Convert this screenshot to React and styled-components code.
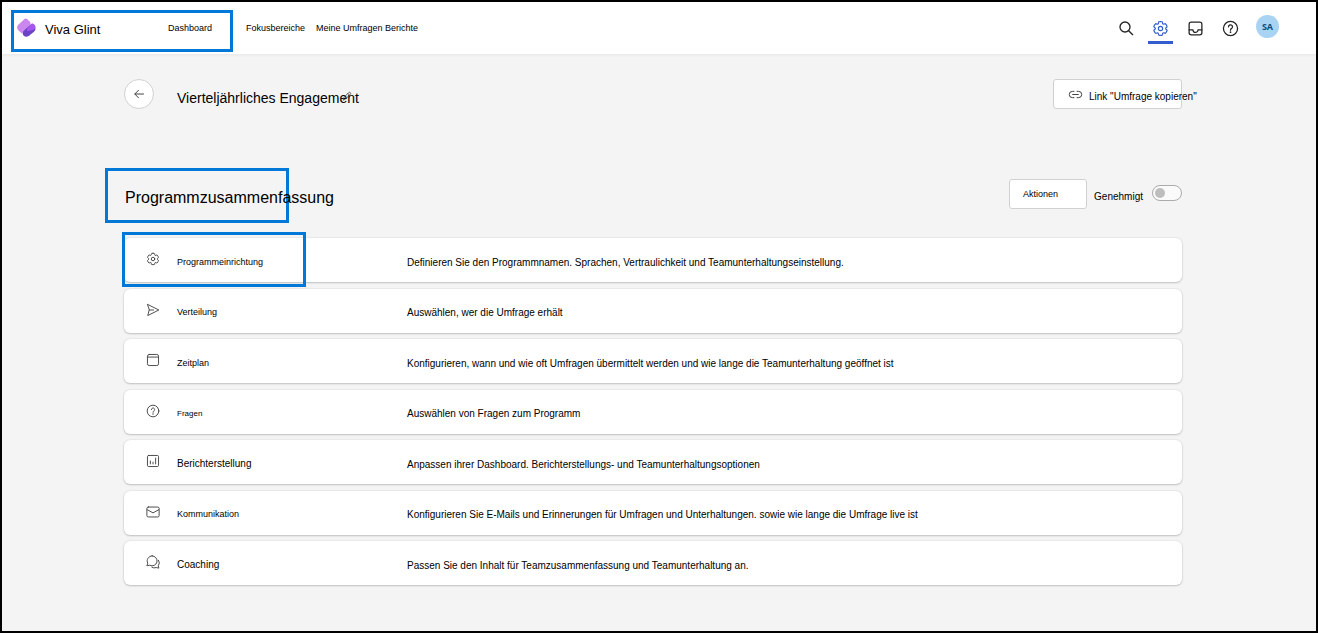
import React, { useState } from "react";
import styled, { createGlobalStyle, css } from "styled-components";

const GlobalStyle = createGlobalStyle`
  * {
    box-sizing: border-box;
  }

  body {
    margin: 0;
    color: #000;
    background: #f4f4f4;
    font-family: "Liberation Sans", Arial, sans-serif;
    font-size: 10px;
  }

  button {
    font-family: inherit;
    color: inherit;
    cursor: pointer;
  }
`;

const Page = styled.div`
  min-height: 100vh;
  border: 2px solid #000;
`;

const highlight = css`
  border: 3px solid #0078d7;
`;

const Header = styled.header`
  display: flex;
  align-items: center;
  justify-content: space-between;
  height: 52px;
  padding: 0 37px 0 9px;
  background: #fff;
  box-shadow: 0 1px 3px rgba(0, 0, 0, 0.06);
`;

const Nav = styled.nav`
  display: flex;
  align-items: center;
  gap: 11px;
  padding-top: 6px;
`;

const BrandBox = styled.div`
  ${highlight}
  display: flex;
  align-items: center;
  justify-content: space-between;
  width: 222px;
  height: 42px;
  padding: 0 18px 7px 3px;
  margin-right: 2px;
`;

const Brand = styled.a`
  display: flex;
  align-items: center;
  gap: 9px;
  color: #000;
  font-size: 13px;
  text-decoration: none;

  span {
    padding-top: 4px;
  }
`;

const NavLink = styled.a`
  padding-bottom: 6px;
  color: #000;
  font-size: 9px;
  line-height: 12px;
  white-space: nowrap;
  text-decoration: none;
`;

const BrandLink = styled(NavLink)`
  padding-bottom: 0;
`;

const Tools = styled.div`
  display: flex;
  align-items: center;
  gap: 10px;
`;

const ToolButton = styled.button`
  display: flex;
  align-items: center;
  justify-content: center;
  width: 25px;
  height: 32px;
  padding: 0;
  border: 0;
  border-top: 3px solid transparent;
  border-bottom: 3px solid ${({ $active }) => ($active ? "#335ccc" : "transparent")};
  color: ${({ $active }) => ($active ? "#335ccc" : "#242424")};
  background: none;
`;

const Avatar = styled.button`
  width: 23px;
  height: 23px;
  margin: 0 0 3px 3px;
  padding: 0;
  border: 0;
  border-radius: 50%;
  background: #a9d3f2;
  && {
    color: #0f4c7c;
  }
  font-family: "Open Sans", sans-serif;
  font-size: 9px;
  font-weight: 700;
`;

const Main = styled.main`
  padding: 25px 134px 40px 122px;
`;

const TitleRow = styled.div`
  display: flex;
  align-items: center;
  justify-content: space-between;
`;

const TitleGroup = styled.div`
  display: flex;
  align-items: center;
  gap: 23px;
`;

const BackButton = styled.button`
  display: flex;
  align-items: center;
  justify-content: center;
  width: 30px;
  height: 30px;
  padding: 0;
  border: 1px solid #d1d1d1;
  border-radius: 50%;
  color: #424242;
  background: #fff;
`;

const Title = styled.h1`
  position: relative;
  margin: 0;
  padding-top: 8px;
  font-size: 14px;
  font-weight: 400;
  line-height: 20px;
`;

const EditButton = styled.button`
  position: absolute;
  top: 11px;
  right: 7px;
  display: flex;
  padding: 0;
  border: 0;
  color: #424242;
  background: none;
`;

const Button = styled.button`
  display: flex;
  align-items: center;
  gap: 6px;
  width: ${({ $wide }) => ($wide ? 129 : 78)}px;
  height: 30px;
  padding: 0 0 0 ${({ $wide }) => ($wide ? 14 : 13)}px;
  border: 1px solid #d1d1d1;
  border-radius: 3px;
  background: #fff;
  font-size: ${({ $wide }) => ($wide ? 10 : 9)}px;
  white-space: nowrap;

  span {
    padding-top: 4px;
  }

  svg {
    flex: none;
    color: #424242;
  }
`;

const SectionRow = styled.div`
  display: flex;
  align-items: center;
  justify-content: space-between;
  margin: 59px 0 15px -19px;
`;

const SectionBox = styled.div`
  ${highlight}
  width: 184px;
  height: 55px;
  padding: 17px 0 0 17px;
`;

const SectionTitle = styled.h2`
  margin: 0;
  font-size: 16px;
  font-weight: 400;
  line-height: 20px;
  white-space: nowrap;
`;

const Controls = styled.div`
  display: flex;
  align-items: center;
  gap: 7px;
  padding-bottom: 3px;
`;

const ToggleLabel = styled.label`
  display: flex;
  align-items: center;
  gap: 9px;

  span {
    padding-top: 4px;
  }
`;

const Toggle = styled.input`
  appearance: none;
  display: flex;
  align-items: center;
  width: 30px;
  height: 16px;
  margin: 0 0 2px;
  padding: 0 2px;
  border: 1px solid #ababab;
  border-radius: 8px;
  background: #fafafa;

  &::before {
    content: "";
    width: 10px;
    height: 10px;
    border-radius: 50%;
    background: #bdbdbd;
  }

  &:checked {
    justify-content: flex-end;
  }
`;

const Cards = styled.ul`
  display: flex;
  flex-direction: column;
  justify-content: space-between;
  min-height: 347px;
  margin: 0;
  padding: 0;
  list-style: none;
`;

const Card = styled.li`
  position: relative;
  border-radius: 6px;
  background: #fff;
  box-shadow: 0 0 2px rgba(0, 0, 0, 0.14), 0 1px 2px rgba(0, 0, 0, 0.18);
`;

const CardLink = styled.a`
  display: grid;
  grid-template-columns: 31px 230px 1fr;
  align-items: center;
  height: 44px;
  padding: 0 22px;
  color: #000;
  text-decoration: none;

  svg {
    margin-bottom: 2px;
    color: #424242;
  }
`;

const CardName = styled.span`
  padding-top: 3px;
  font-size: ${({ $size }) => $size}px;
`;

const CardText = styled.span`
  padding-top: 4px;
  font-size: 10px;
`;

const Marker = styled.div`
  ${highlight}
  position: absolute;
  top: -6px;
  left: -2px;
  width: 184px;
  height: 55px;
  pointer-events: none;
`;

const Icon = ({ size = 14, weight = 1.6, children }) => (
  <svg
    width={size}
    height={size}
    viewBox="0 0 24 24"
    fill="none"
    stroke="currentColor"
    strokeWidth={weight}
    strokeLinecap="round"
    strokeLinejoin="round"
    aria-hidden="true"
  >
    {children}
  </svg>
);

const GearShape = () => (
  <>
    <path d="M12.01 2.25c.74 0 1.47.1 2.18.25.32.07.55.33.59.65l.17 1.53a1.38 1.38 0 0 0 1.92 1.11l1.4-.61c.3-.13.64-.06.85.17a9.8 9.8 0 0 1 2.2 3.8c.1.3 0 .63-.26.82l-1.25.92a1.38 1.38 0 0 0 0 2.22l1.25.92c.26.19.36.52.27.82a9.8 9.8 0 0 1-2.2 3.8.75.75 0 0 1-.85.17l-1.4-.62a1.38 1.38 0 0 0-1.93 1.12l-.17 1.52a.75.75 0 0 1-.58.65 9.52 9.52 0 0 1-4.4 0 .75.75 0 0 1-.57-.65l-.17-1.52a1.38 1.38 0 0 0-1.93-1.11l-1.4.62a.75.75 0 0 1-.85-.18 9.8 9.8 0 0 1-2.2-3.8c-.1-.3 0-.63.26-.82l1.25-.92a1.38 1.38 0 0 0 0-2.22l-1.24-.92a.75.75 0 0 1-.28-.82 9.8 9.8 0 0 1 2.2-3.8c.23-.23.57-.3.86-.17l1.4.62c.4.17.86.15 1.25-.08.38-.22.63-.6.68-1.04l.17-1.53a.75.75 0 0 1 .58-.65c.72-.16 1.45-.24 2.2-.25Z" />
    <circle cx="12" cy="12" r="3" />
  </>
);

const HelpShape = () => (
  <>
    <circle cx="12" cy="12" r="10" />
    <path d="M9.2 9.6a2.8 2.8 0 1 1 4.5 2.2c-1.1.8-1.7 1.3-1.7 2.5" />
    <path d="M12 17.2v.1" strokeWidth="2.4" />
  </>
);

const Logo = () => (
  <svg width="19" height="19" viewBox="0 0 19 19" aria-hidden="true">
    <path
      d="M6 17V12.5L13.5 6.5L16 6.5Q18.5 8 18.5 10.5Q18.500 12.500 17 13.800L12 17.700Q9.500 19.300 7.500 18.200Z"
      fill="#6b43c4"
    />
    <path
      d="M10 10.500L15 5.200Q18.500 6.500 18.500 9Q18.400 11 16 12Q12.500 13 10 13Z"
      fill="#a556ee"
    />
    <path
      d="M1 7L7.500 1Q8.700-.1 10 .9L12.500 3.200Q14.300 5 12.800 7L6.800 12.800Q5.500 14.200 5.700 16.200L1.500 12.500Q-1 9.800 1 7Z"
      fill="#cb87ee"
    />
  </svg>
);

const ITEMS = [
  {
    name: "Programmeinrichtung",
    text: "Definieren Sie den Programmnamen. Sprachen, Vertraulichkeit und Teamunterhaltungseinstellung.",
    marked: true,
    icon: <GearShape />,
  },
  {
    name: "Verteilung",
    text: "Auswählen, wer die Umfrage erhält",
    icon: <path d="M3 2.5L22 12L3 21.5L5.500 12ZM5.500 12H13" />,
  },
  {
    name: "Zeitplan",
    text: "Konfigurieren, wann und wie oft Umfragen übermittelt werden und wie lange die Teamunterhaltung geöffnet ist",
    icon: (
      <>
        <rect x="2.5" y="2.5" width="19" height="19" rx="3" />
        <path d="M3 7H21" />
      </>
    ),
  },
  {
    name: "Fragen",
    size: 8,
    text: "Auswählen von Fragen zum Programm",
    icon: <HelpShape />,
  },
  {
    name: "Berichterstellung",
    size: 10,
    text: "Anpassen ihrer Dashboard. Berichterstellungs- und Teamunterhaltungsoptionen",
    icon: (
      <>
        <rect x="2.5" y="2.5" width="19" height="19" rx="2" />
        <path d="M7.500 12V17M12 14V17M16.500 7V17" />
      </>
    ),
  },
  {
    name: "Kommunikation",
    text: "Konfigurieren Sie E-Mails und Erinnerungen für Umfragen und Unterhaltungen. sowie wie lange die Umfrage live ist",
    icon: (
      <>
        <rect x="1.5" y="3.5" width="21" height="17" rx="2.5" />
        <path d="M2 8L12 13.5L22 8" />
      </>
    ),
  },
  {
    name: "Coaching",
    size: 10,
    text: "Passen Sie den Inhalt für Teamzusammenfassung und Teamunterhaltung an.",
    icon: (
      <>
        <path d="M10.5 1.5a8.500 8.500 0 1 1-4 16L1.500 18.500L3 14A8.500 8.500 0 0 1 10.500 1.500Z" />
        <path d="M10 21a8 8 0 0 0 7.500 .5L22 22.500L21 18.500A8 8 0 0 0 21.500 9" />
      </>
    ),
  },
];

const App = () => {
  const [approved, setApproved] = useState(false);

  return (
    <Page>
      <GlobalStyle />
      <Header>
        <Nav>
          <BrandBox>
            <Brand href="#home">
              <Logo />
              <span>Viva Glint</span>
            </Brand>
            <BrandLink href="#dashboard">Dashboard</BrandLink>
          </BrandBox>
          <NavLink href="#focus">Fokusbereiche</NavLink>
          <NavLink href="#reports">Meine Umfragen Berichte</NavLink>
        </Nav>
        <Tools>
          <ToolButton aria-label="Suchen">
            <Icon size={16} weight={2}>
              <circle cx="10.5" cy="10.5" r="7.5" />
              <path d="M16 16L22 22" />
            </Icon>
          </ToolButton>
          <ToolButton aria-label="Einstellungen" $active>
            <Icon size={17}>
              <GearShape />
            </Icon>
          </ToolButton>
          <ToolButton aria-label="Posteingang">
            <Icon size={17} weight={1.8}>
              <rect x="3" y="3" width="18" height="18" rx="3" />
              <path d="M3 14H8.500a3.500 3.500 0 0 0 7 0H21" />
            </Icon>
          </ToolButton>
          <ToolButton aria-label="Hilfe">
            <Icon size={17} weight={1.8}>
              <HelpShape />
            </Icon>
          </ToolButton>
          <Avatar>SA</Avatar>
        </Tools>
      </Header>
      <Main>
        <TitleRow>
          <TitleGroup>
            <BackButton aria-label="Zurück">
              <Icon size={12} weight={2}>
                <path d="M21 12H4M11 4.500L3.500 12L11 19.500" />
              </Icon>
            </BackButton>
            <Title>
              Vierteljährliches Engagement
              <EditButton aria-label="Bearbeiten">
                <Icon size={10} weight={2}>
                  <path d="M3 21L5 15L16 4a2.500 2.500 0 0 1 4 4L9 19ZM14 6L18 10" />
                </Icon>
              </EditButton>
            </Title>
          </TitleGroup>
          <Button $wide>
            <Icon size={15}>
              <path d="M9.500 7H7a5 5 0 0 0 0 10H9.500M14.500 7H17a5 5 0 0 1 0 10H14.500M7.500 12H16.500" />
            </Icon>
            <span>Link "Umfrage kopieren"</span>
          </Button>
        </TitleRow>
        <SectionRow>
          <SectionBox>
            <SectionTitle>Programmzusammenfassung</SectionTitle>
          </SectionBox>
          <Controls>
            <Button>Aktionen</Button>
            <ToggleLabel>
              <span>Genehmigt</span>
              <Toggle
                type="checkbox"
                role="switch"
                checked={approved}
                onChange={(e) => setApproved(e.target.checked)}
              />
            </ToggleLabel>
          </Controls>
        </SectionRow>
        <Cards>
          {ITEMS.map((item) => (
            <Card key={item.name}>
              <CardLink href={`#${item.name.toLowerCase()}`}>
                <Icon>{item.icon}</Icon>
                <CardName $size={item.size || 9}>{item.name}</CardName>
                <CardText>{item.text}</CardText>
              </CardLink>
              {item.marked && <Marker />}
            </Card>
          ))}
        </Cards>
      </Main>
    </Page>
  );
};

export default App;
